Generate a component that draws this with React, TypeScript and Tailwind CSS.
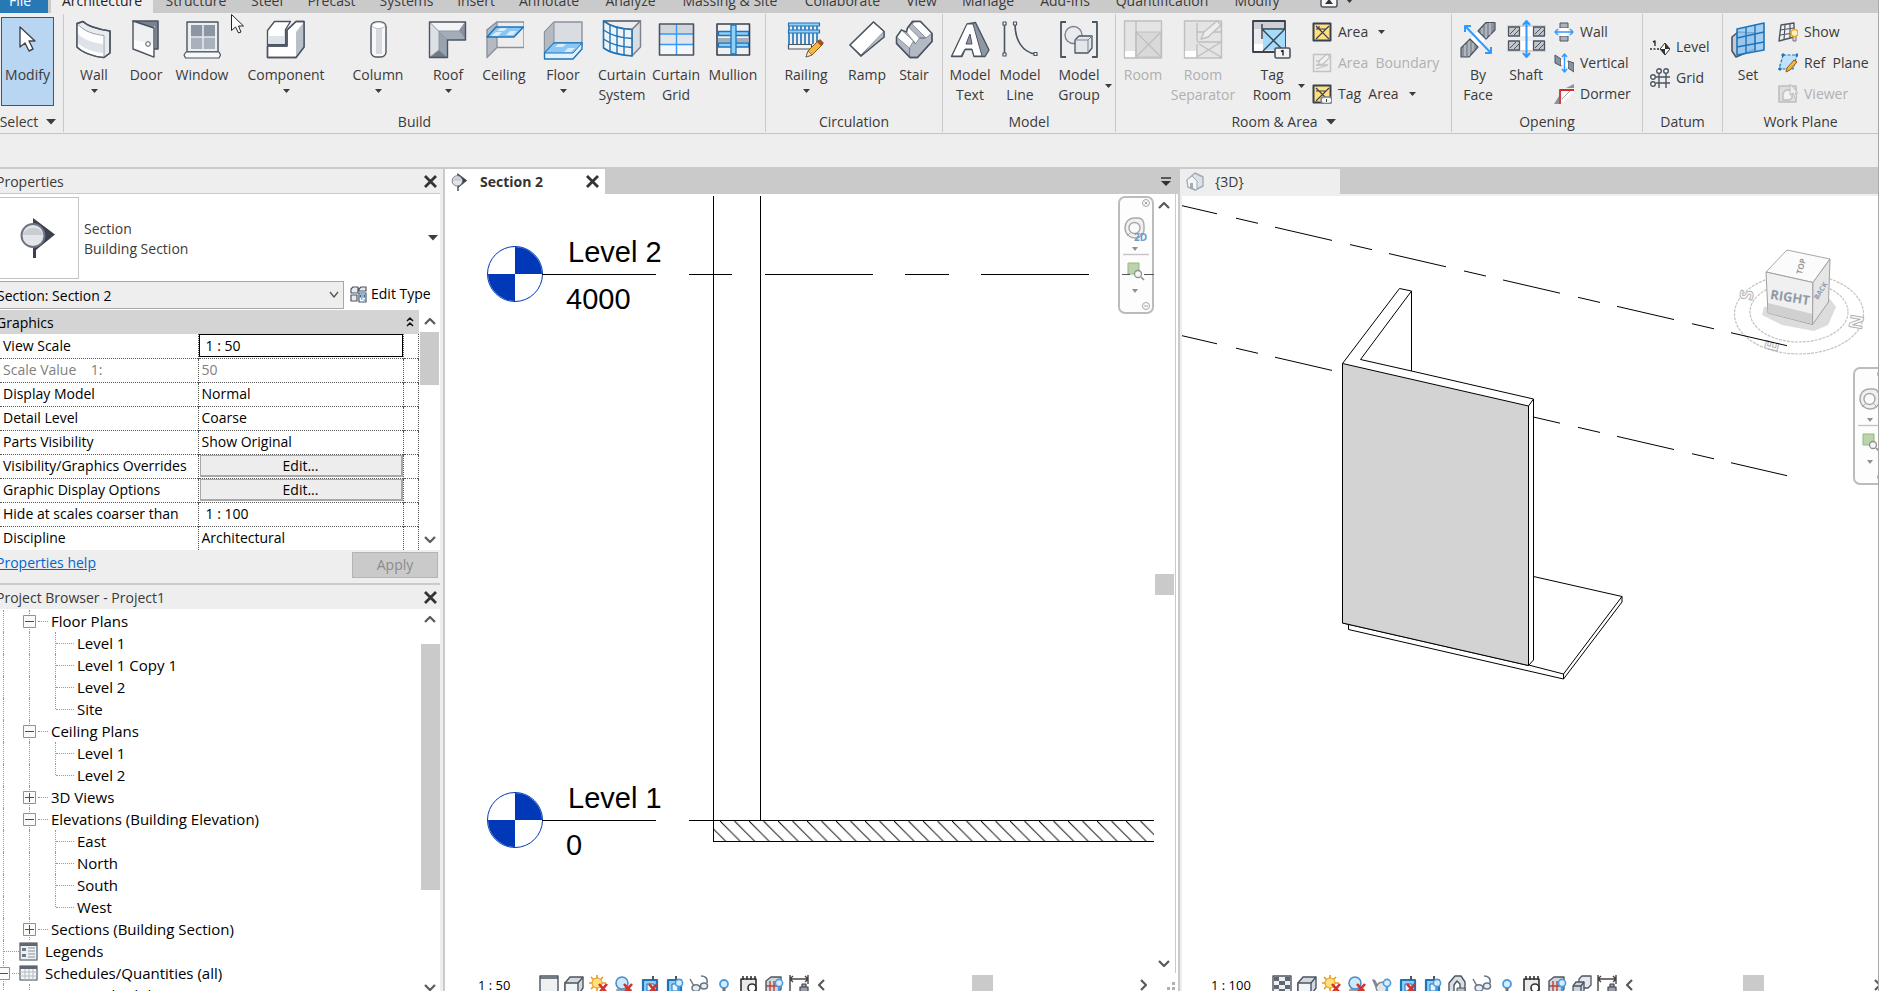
import type { ReactNode } from 'react';
import { clsx } from 'clsx';

const INK = '#4b5562';
const BLUE = '#1f74b8';
const AZURE = '#3399ff';

/* ---------- shared bits ---------- */

function Svg({ w, h, children, className }: { w: number; h: number; children: ReactNode; className?: string }) {
  return (
    <svg
      width={w}
      height={h}
      viewBox={`0 0 ${w} ${h}`}
      fill="none"
      strokeLinejoin="round"
      aria-hidden="true"
      className={clsx('block shrink-0', className)}
    >
      {children}
    </svg>
  );
}

function Caret({ big = false, className }: { big?: boolean; className?: string }) {
  return big ? (
    <Svg w={10} h={6} className={className}>
      <path d="M0 0h10L5 5.500z" fill="#3c3c3c" />
    </Svg>
  ) : (
    <Svg w={7} h={4} className={className}>
      <path d="M0 0h7L3.500 4z" fill="#3c3c3c" />
    </Svg>
  );
}

function Chevron({ dir }: { dir: 'up' | 'down' | 'left' | 'right' }) {
  const d = {
    up: 'M1 8l5-5 5 5',
    down: 'M1 4l5 5 5-5',
    left: 'M8 1L3 6l5 5',
    right: 'M4 1l5 5-5 5',
  }[dir];
  return (
    <Svg w={12} h={12}>
      <path d={d} stroke="#5a5a5a" strokeWidth="2.200" />
    </Svg>
  );
}

function CloseIcon() {
  return (
    <Svg w={13} h={13}>
      <path d="M1 1l11 11M12 1L1 12" stroke="#333" strokeWidth="2.800" />
    </Svg>
  );
}

function SectionHead({ size }: { size: number }) {
  return (
    <svg width={size} height={size} viewBox="0 0 40 40" fill="none" aria-hidden="true" className="block shrink-0">
      <path d="M14 0L36 16.500 17 32v8h-3z" fill="#3b414d" />
      <circle cx="14" cy="17.500" r="11.500" fill="#e3e5e8" stroke="#6b7380" strokeWidth="2" />
      <path d="M4 17a10.500 10.500 0 0120 0z" fill="#c9ccd1" />
    </svg>
  );
}

/* ---------- ribbon icons, 40 x 40 ---------- */

const big: Record<string, ReactNode> = {
  modify: (
    <path d="M12 7v20l5-4 4 8 4-2-4-8h6z" fill="#fff" stroke="#3f4650" strokeWidth="1.400" />
  ),
  wall: (
    <g stroke={INK} strokeWidth="1.400">
      <path d="M3 3.500l6-2c6 6 17 8 27 9.500v22l-6 4.500C19 37 8 32 3 27z" fill="#e9ebee" />
      <path d="M3 3.500c7 8 17 11 27 12v22C19 37 8 32 3 27z" fill="#fdfdfd" stroke="#9aa1aa" strokeWidth="1" />
      <path d="M4 14c8 7 17 9 25 10v9C18 32 9 28 4 23z" fill="#dfe3e9" stroke="none" />
      <path d="M3 3.500l6-2c6 6 17 8 27 9.500v22l-6 4.500C19 37 8 32 3 27z" />
    </g>
  ),
  door: (
    <g>
      <path d="M7 1h25v28h-5V8z" fill="#7b838f" stroke={INK} strokeWidth="1.600" />
      <path d="M29 6v22h-2V7z" fill="#d0d5db" />
      <path d="M7 1l21 7v29L7 29z" fill="#eef0f2" stroke={INK} strokeWidth="1.400" />
      <path d="M8 20l19 4v12L8 28z" fill="#fff" opacity=".8" />
      <circle cx="22" cy="24" r="2.300" fill="#fff" stroke={INK} />
    </g>
  ),
  window: (
    <g>
      <rect x="5" y="2" width="31" height="30" fill="#eceef0" stroke={INK} strokeWidth="1.400" />
      <rect x="9" y="5" width="24" height="24" fill="#8b95a4" />
      <path d="M9 17h24v12H9z" fill="#a9b1bd" />
      <path d="M21 5v24M9 17h24" stroke="#e6e8eb" strokeWidth="1.600" />
      <path d="M4 32h33l1.500 3-1.500 3H3.500L2 35z" fill="#f7f8f9" stroke={INK} strokeWidth="1.200" />
    </g>
  ),
  component: (
    <g stroke={INK} strokeWidth="1.400">
      <path d="M1.500 10.500l7-9h16l-5 8v15h-18z" fill="#fff" />
      <path d="M2.500 16h16v8h-16z" fill="#dfe3e9" stroke="none" />
      <path d="M21 10l9-8.500h8V27l-8 10.500H1.500V26H21z" fill="#fff" />
      <path d="M30 12l8-10v25l-8 10.500z" fill="#b9c0ca" stroke="none" />
      <path d="M21 10l9-8.500h8V27l-8 10.500H1.500V26H21z" />
    </g>
  ),
  column: (
    <g>
      <rect x="13" y="2" width="15" height="35" rx="5" fill="#f8f8f9" stroke={INK} strokeWidth="1.400" />
      <path d="M18 8h6v26h-6z" fill="#d6d9dd" />
      <ellipse cx="20.500" cy="5.500" rx="6.500" ry="3" fill="#fff" stroke="#b9bec5" />
    </g>
  ),
  roof: (
    <g>
      <path d="M1.500 2h36v18h-18v17.500h-18z" fill="#dde1e6" />
      <path d="M1.500 2h36l-6 9H11z" fill="#f3f4f6" />
      <path d="M11 11h20l6.500 9h-18z" fill="#a3acb8" />
      <path d="M31 11l6.500-9v18z" fill="#8791a0" />
      <path d="M11 11v19l8.500 7.500V20z" fill="#98a2b0" />
      <path d="M1.500 37.500L11 30l8.500 7.500z" fill="#6f7987" />
      <path d="M1.500 2L19.500 20M11 30V11h20M11 30l-9 7M31 11l6-8.500" stroke="#8d96a3" />
      <path d="M1.500 2h36v18h-18v17.500h-18z" stroke={INK} strokeWidth="1.400" />
    </g>
  ),
  ceiling: (
    <g>
      <path d="M3 10l10-8h27v25.500H13z" fill="#ededee" stroke="#8c929b" strokeWidth="1.400" />
      <path d="M3 10l10-8v25.500L3 37.500z" fill="#b5bac2" stroke="#8c929b" strokeWidth="1.400" />
      <path d="M12 7h27.500L30 17H3z" fill="#8cc6f5" stroke={BLUE} strokeWidth="1.400" />
      <path d="M16 8h7l-3 3h-7zM26 11h7l-4 4h-7zM12 12h6l-4 4H7z" fill="#d7ecfc" />
    </g>
  ),
  floor: (
    <g>
      <path d="M1.500 12L11 2h28v22H11L1.500 33z" fill="#d9dce1" stroke="#8c929b" strokeWidth="1.400" />
      <path d="M1.500 12L11 2v22L1.500 33z" fill="#b5bac2" stroke="#8c929b" />
      <path d="M1.500 33L11 23h28v6L30 39H1.500z" fill="#e2f2fd" stroke={BLUE} strokeWidth="1.400" />
      <path d="M1.500 33L11 23h28l-9 10z" fill="#8cc6f5" stroke={BLUE} />
      <path d="M15 24h8l-3 3h-8zM25 28h7l-4 4h-7z" fill="#d7ecfc" />
    </g>
  ),
  curtainSystem: (
    <g>
      <path d="M1.500 1h37L30 9.500C18 9 8 6 1.500 1z" fill="#eee" stroke={INK} strokeWidth="1.400" />
      <path d="M30 9.500L38.500 1v26L30 36z" fill="#dadde1" stroke="#7b828c" strokeWidth="1.400" />
      <path d="M1.500 1C8 6 18 9 30 9.500V36C18 35 8 33 1.500 28z" fill="#eef3f8" stroke={BLUE} strokeWidth="1.600" />
      <path
        d="M1.500 10c7 5 17 8 28.500 8.500M1.500 19c7 5 17 8 28.500 8.500M8 5v27M15 8v26M22 9v26"
        stroke={BLUE}
        strokeWidth="1.400"
      />
    </g>
  ),
  curtainGrid: (
    <g>
      <path d="M3.500 4h34v31h-34z" fill="#f5f6f7" />
      <path d="M3.500 4h34v10h-34z" fill="#d2d5da" />
      <path d="M3.500 14h34v10h-34z" fill="#e4e6ea" />
      <path d="M20.500 4v31M3.500 14h34M3.500 24.500h34" stroke={AZURE} strokeWidth="1.400" />
      <path d="M3.500 4h34v31h-34z" stroke={INK} strokeWidth="1.600" />
    </g>
  ),
  mullion: (
    <g>
      <path d="M4 4h32.500v31H4z" fill="#eef0f2" stroke="#39414d" strokeWidth="1.600" />
      <path d="M5 18h31v4H5z" fill="#a6adb7" />
      <path d="M5.500 11.500h30v4h-30zM5.500 23h30v4h-30z" fill="#8fd0fb" stroke={BLUE} strokeWidth="1.300" />
      <path d="M18 5h5v29h-5z" fill="#8fd0fb" stroke={BLUE} strokeWidth="1.300" />
    </g>
  ),
  railing: (
    <g>
      <path d="M3 5v22M7 5v19M11 5v19M15 5v19M19 5v19M23 5v19M27 5v19M31 5v19" stroke={BLUE} strokeWidth="1.600" />
      <path d="M2.500 3h31v3h-31zM2.500 10h31v3h-31z" fill="#8fd0fb" stroke={BLUE} strokeWidth="1.200" />
      <path d="M2.500 24.500h23v4.500h-23z" fill="#f4f4f4" stroke={INK} strokeWidth="1.200" />
      <path d="M20 37l2-6 11-11 4 4-11 11z" fill="#f6b73c" stroke="#8a5a1c" />
      <path d="M31 22l4 4 3-3-4-4z" fill="#a3512c" />
      <path d="M20 37l2-6 4 4z" fill="#f5e6cf" stroke="#6b5a45" strokeWidth=".8" />
    </g>
  ),
  ramp: (
    <g stroke={INK} strokeWidth="1.300">
      <path d="M3 25L26.500 2 37 11.500V17L14 36z" fill="#c9ced5" />
      <path d="M3 25L26.500 2 37 11.500 14 35z" fill="#fff" stroke="#7c838d" strokeWidth="1" />
      <path d="M14 36l23-24v5.500z" fill="#b6bdc7" stroke="none" />
      <path d="M3 25L26.500 2 37 11.500V17L14 36z" />
    </g>
  ),
  stair: (
    <g stroke={INK} strokeWidth="1.300">
      <path d="M2.500 17l5-7 5 2 1-4 5-6.500h8l11.500 12v8L23.500 37.500H16L2.500 23.500z" fill="#b3bac4" />
      <path d="M2.500 17l5-7 12 11-4 7zM12.500 12l2-5 11 11-4 6zM18 4l3-2.500h5L38 13l-6 5z" fill="#fff" stroke="#8d949e" strokeWidth="1" />
      <path d="M15.500 28v9M19.500 21l2 3M25.500 18l6 0" stroke="#7c838d" />
      <path d="M2.500 17l5-7 5 2 1-4 5-6.500h8l11.500 12v8L23.500 37.500H16L2.500 23.500z" />
    </g>
  ),
  modelText: (
    <g>
      <path d="M17 4l8.500-1.500L39 30l-4 6.500H24l-2-7h-7l-3 7H1.500z" fill="#8f97a3" stroke={INK} strokeWidth="1.400" />
      <path d="M17 4h6l9 32h-8l-2-7h-7l-4 7H2zM20 14l-4 10h6z" fill="#fff" fillRule="evenodd" stroke={INK} />
    </g>
  ),
  modelLine: (
    <g stroke={INK} strokeWidth="1.600">
      <path d="M4.500 4v30M15 4c0 17 8 28 20 30" />
      <path d="M3 2h3v3H3zM3 33h3v3H3zM13.500 2h3v3h-3zM34 32.500h3v3h-3z" fill="#fff" strokeWidth="1.200" />
    </g>
  ),
  modelGroup: (
    <g>
      <path d="M7 2H2v35h5M33 2h5v35h-5" stroke={INK} strokeWidth="1.800" />
      <circle cx="14.500" cy="15" r="8.500" fill="#e8eaed" stroke="#7c838d" strokeWidth="1.400" />
      <path d="M16 20l4-4h13v12l-4 5H16z" fill="#e3e6ea" stroke={INK} strokeWidth="1.300" />
      <path d="M16 20h13v13M29 20l4-4" stroke="#7c838d" />
    </g>
  ),
  room: (
    <g stroke="#bfbfbf">
      <path d="M1.500 1h37v37h-37z" fill="#e4e4e4" strokeWidth="1.400" />
      <path d="M2 31h10v6H2z" fill="#fff" stroke="none" />
      <path d="M13 12h25v25H13z" fill="#d9d9d9" strokeWidth="1.200" />
      <path d="M13 1v36M13 12l25 25M38 12L13 37" strokeWidth="1.400" />
    </g>
  ),
  roomSeparator: (
    <g stroke="#bfbfbf">
      <path d="M1.500 1h37v37h-37z" fill="#e4e4e4" strokeWidth="1.400" />
      <path d="M2 31h11v6H2z" fill="#fff" stroke="none" />
      <path d="M14 3v18M14 22h24M14 24v13M14 37l24-15M16 24l22 13M14 12h10M30 12h8" strokeWidth="1.400" />
      <path d="M18 19l3-7L34 1l4 4-13 12z" fill="#eee" strokeWidth="1.400" />
    </g>
  ),
  tagRoom: (
    <g>
      <path d="M1 1h32v31H1z" fill="#e9ebee" stroke="#39414d" strokeWidth="1.800" />
      <path d="M2 2h30v7H2z" fill="#cdd1d7" />
      <path d="M11 10h22v20H11z" fill="#a6dcfb" />
      <path d="M2 24h9v7H2z" fill="#fff" />
      <path d="M10 4v15M10 9h23M11 10l21 21M32 10L11 31" stroke="#39414d" strokeWidth="1.400" />
      <rect x="23" y="28" width="15" height="10" rx="1.500" fill="#f4f4f4" stroke={INK} strokeWidth="1.600" />
      <path d="M29 31.500l2-1v5" stroke="#222" strokeWidth="1.400" />
    </g>
  ),
  byFace: (
    <g>
      <path d="M12 19l8-8 8 8-8 8z" fill="#fff" />
      <path d="M37 2.500h-9l-8 8.500 8 8 9-9zM3 37V28l9-9 8 8-9 10z" fill="#8c929b" stroke={INK} strokeWidth="1.200" />
      <path d="M24 8v6M28 4v14M32 3v12M7 25v11M11 21v15M15 23v8" stroke="#d4d7dc" />
      <path d="M8 7l24 25M7 12V6h6M27 33h6v-6" stroke={AZURE} strokeWidth="2" />
    </g>
  ),
  shaft: (
    <g>
      <path d="M1 5h39v2H1zM1 30h39v2H1z" fill="#d3d3d3" />
      <path d="M13 7h15v9H13zM13 21h15v9H13z" fill="#fff" />
      <path d="M2.500 7h11v9h-11zM27.500 7h11v9h-11zM2.500 21h11v9h-11zM27.500 21h11v9h-11z" fill="#c3c7cd" stroke={INK} strokeWidth="1.300" />
      <path d="M4 14l6-6M8 15l5-5M29 14l6-6M33 15l5-5M4 28l6-6M8 29l5-5M29 28l6-6M33 29l5-5" stroke={INK} />
      <path d="M20.500 1v36M17 5l3.500-4L24 5M17 33l3.500 4 3.500-4" stroke={AZURE} strokeWidth="2" />
    </g>
  ),
  setPlane: (
    <g>
      <path d="M4 17l6-5 17 1v16L8 37l-4-6z" fill="#c5cad1" stroke={INK} strokeWidth="1.600" />
      <path d="M9 9l27-6v27L9 35z" fill="#8cc6f5" fillOpacity=".75" stroke={BLUE} strokeWidth="1.600" />
      <path d="M18 7v26M27 5v27M9 18l27-6M9 27l27-5" stroke={BLUE} strokeWidth="1.400" />
    </g>
  ),
};

/* ---------- ribbon icons, 20 x 20 ---------- */

const small: Record<string, ReactNode> = {
  area: (
    <g stroke="#39414d">
      <path d="M1.500 1.500h17v17h-17z" fill="#ffdf7e" strokeWidth="2" />
      <path d="M4 4l13 13M17 4L4 17M4 7h10M7 4v3" strokeWidth="1.100" />
    </g>
  ),
  areaBoundary: (
    <g stroke="#c2c2c2">
      <path d="M1.500 1.500h17v17h-17z" fill="#ececec" strokeWidth="1.400" />
      <path d="M4 8h4M4 12h12M4 16l12-4" strokeWidth="1.300" />
      <path d="M6 12l2-5 7-6 3 3-7 7z" fill="#f2f2f2" strokeWidth="1.300" />
    </g>
  ),
  tagArea: (
    <g stroke="#39414d">
      <path d="M1.500 1.500h17v17h-17z" fill="#ffdf7e" strokeWidth="2" />
      <path d="M4 4l13 13M17 4L4 17M4 7h10" strokeWidth="1.100" />
      <rect x="9" y="13" width="11" height="6.500" rx="3" fill="#f4f4f4" stroke="#7c838d" strokeWidth="1.500" />
      <path d="M14.500 15v3" />
    </g>
  ),
  openWall: (
    <g>
      <path d="M6 1h8v5H6zM6 14h8v5H6z" fill="#aeb3bb" stroke={INK} />
      <path d="M6 6h8v8H6z" fill="#fff" />
      <path d="M1 10h18M4 7l-3 3 3 3M16 7l3 3-3 3" stroke={AZURE} strokeWidth="1.400" />
    </g>
  ),
  openVertical: (
    <g>
      <path d="M1 2l6 4v7l-6-3zM14 8l6 2v9l-6-4z" fill="#8c929b" stroke={INK} />
      <path d="M7 6l7 3v6l-7-3z" fill="#fff" />
      <path d="M10.500 1v18M8 4l2.500-3L13 4M8 16l2.500 3 2.500-3" stroke={AZURE} strokeWidth="1.400" />
    </g>
  ),
  dormer: (
    <g>
      <path d="M12 4l8-4v4zM0 20l5-8v8z" fill="#8c929b" />
      <path d="M7 7h13L9 19z" fill="#fff" />
      <path d="M16 7L8 15" stroke="#aaa" />
      <path d="M6 20V6h14" stroke="#d42a2a" strokeWidth="1.800" />
    </g>
  ),
  level: (
    <g>
      <path d="M0 12h10" stroke="#333" strokeWidth="1.300" strokeDasharray="2 1.500" />
      <path d="M3 5l2-1v5" stroke="#333" strokeWidth="1.400" />
      <path d="M15 6l5 6-5 6-5-6z" fill="#fff" stroke="#333" />
      <path d="M15 6l5 6h-5zM15 18l-5-6h5z" fill="#333" />
    </g>
  ),
  grid: (
    <g stroke={INK} strokeWidth="1.400">
      <path d="M6 9h14M6 15h14M9 5v15M16 5v15" />
      <circle cx="9" cy="3" r="2.300" fill="#fff" />
      <circle cx="16" cy="3" r="2.300" fill="#fff" />
      <circle cx="3" cy="9" r="2.300" fill="#fff" />
      <circle cx="3" cy="16" r="2.300" fill="#fff" />
    </g>
  ),
  show: (
    <g>
      <path d="M3 3l13-2v14L1 19z" fill="#f1f1f1" stroke={INK} strokeWidth="1.400" />
      <path d="M2 8l14-2M2 13l14-2M7 3L6 18M12 2v14" stroke={INK} strokeWidth="1.200" />
      <path d="M15 14h3v5h-3z" fill="#d8dade" stroke="#6b7380" />
      <circle cx="16.500" cy="11" r="3.500" fill="#fff1b8" stroke="#f1a820" strokeWidth="1.600" />
    </g>
  ),
  refPlane: (
    <g>
      <path d="M5 2h14l-4 14H1z" fill="#bfe2fa" stroke={BLUE} strokeWidth="1.200" strokeDasharray="3 1.500" />
      <path d="M4 1h2v2H4zM18 1h2v2h-2zM1 15h2v2H1z" fill={BLUE} stroke={BLUE} />
      <path d="M8 19l1-4 7-8 3 2-7 8z" fill="#f6b73c" stroke="#8a5a1c" />
    </g>
  ),
  viewer: (
    <g stroke="#bdbdbd">
      <path d="M1 2h17v16H1z" fill="#dedede" strokeWidth="1.600" />
      <path d="M5 9l3-3h6v8l-3 2H5z" fill="#f2f2f2" strokeWidth="1.400" />
      <path d="M12 0v11l3-2 2 5 2-1-2-4h3z" fill="#eee" />
    </g>
  ),
};

/* ---------- view control bar icons ---------- */

const redCross = <path d="M10 9l8 9M18 9l-8 9" stroke="#d0342c" strokeWidth="2.600" />;
const bulb = (
  <g>
    <circle cx="15" cy="8" r="3.600" fill="#d7ecfc" stroke="#4a9be0" strokeWidth="1.600" />
    <path d="M15 12v6" stroke="#4a9be0" strokeWidth="2.400" />
  </g>
);

const controls: Record<string, ReactNode> = {
  coarse: <path d="M1 1h18v18H1zM1 3h18" fill="#eef0f1" stroke={INK} strokeWidth="1.400" />,
  medium: (
    <g>
      <path d="M1 1h18v18H1z" fill="#f0f0f0" stroke={INK} strokeWidth="1.400" />
      <path d="M2 2h5v4H2zM13 2h5v4h-5zM7 6h6v4H7zM2 10h5v4H2zM13 10h5v4h-5zM7 14h6v4H7z" fill="#5e6773" />
    </g>
  ),
  style: (
    <g stroke={INK} strokeWidth="1.400">
      <path d="M1 8l5-6h13v11l-5 7H1z" fill="#d5d9de" />
      <path d="M1 8h13v12H1z" fill="#f4f5f6" />
      <path d="M14 8l5-6" />
    </g>
  ),
  sun: (
    <g>
      <path d="M8 0v17M0 8h17M2 2l12 12M14 2L2 14" stroke="#e59a1c" strokeWidth="1.600" />
      <circle cx="8" cy="8" r="5" fill="#ffe07a" stroke="#e59a1c" />
      {redCross}
    </g>
  ),
  shadow: (
    <g>
      <ellipse cx="10" cy="15" rx="8" ry="3" fill="#9aa1aa" />
      <circle cx="8" cy="8" r="6" fill="#cfe8fb" stroke="#4a8fc6" strokeWidth="1.600" />
      {redCross}
    </g>
  ),
  teapot: (
    <g>
      <path d="M1 5c3 0 3 4 4 6 1-4 9-6 10 0 0 5-2 7-5 7s-6-2-6-6z" fill="#e3e5e8" stroke="#7c838d" strokeWidth="1.400" />
      {bulb}
    </g>
  ),
  crop: (
    <g>
      <path d="M4 5h14v13H4z" fill="#8fd0fb" stroke={BLUE} strokeWidth="2.200" />
      <path d="M0 17h4M14 5V1" stroke={INK} strokeWidth="2" />
      <path d="M8 9h7v7H8z" fill="#e8f4fd" stroke={BLUE} />
      {redCross}
    </g>
  ),
  cropShow: (
    <g>
      <path d="M4 5h13v13H4z" fill="#8fd0fb" stroke={BLUE} strokeWidth="2.200" />
      <path d="M0 17h4M12 5V1" stroke={INK} strokeWidth="2" />
      <path d="M8 9h6v7H8z" fill="#e8f4fd" stroke={BLUE} />
      {bulb}
    </g>
  ),
  lock3d: (
    <g>
      <path d="M2 17V8l6-7h6l4 6v9h-5V9l-3-3-3 4v7z" fill="#dcdfe3" stroke={INK} strokeWidth="1.400" />
      <path d="M10 13h8v6h-8z" fill="#b6bbc3" stroke={INK} />
    </g>
  ),
  glasses: (
    <g stroke="#6b7380" strokeWidth="1.500">
      <path d="M1 4l4 7M12 1c4 0 7 2 6 7" />
      <ellipse cx="7" cy="13" rx="4" ry="3.300" fill="#e3eef7" />
      <ellipse cx="15" cy="11" rx="3.500" ry="3" fill="#e3eef7" />
    </g>
  ),
  reveal: (
    <g>
      <circle cx="10" cy="9" r="4" fill="#d7ecfc" stroke="#4a9be0" strokeWidth="1.800" />
      <path d="M10 13v6" stroke="#6b7380" strokeWidth="3" />
    </g>
  ),
  properties: (
    <g>
      <path d="M2 4h15v14H2z" fill="#e8eaec" stroke="#333" strokeWidth="1.600" />
      <path d="M4 1v4M8 1v4M12 1v4M16 1v4" stroke="#333" strokeWidth="1.600" />
      <circle cx="13" cy="13" r="4" fill="#fff" stroke="#333" strokeWidth="1.600" />
    </g>
  ),
  analytical: (
    <g>
      <path d="M2 6l5-4h10v12l-4 5H2z" fill="#d4d8dd" stroke={INK} strokeWidth="1.400" />
      <path d="M2 11h11M6 6v12M10 6v12" stroke="#b5433b" strokeWidth="1.400" />
      {bulb}
    </g>
  ),
  displace: (
    <g stroke={INK} strokeWidth="1.300">
      <path d="M7 4l3-3h9v9l-3 3H7z" fill="#e6e8eb" />
      <path d="M1 11l3-4h8v9l-3 4H1z" fill="#cfd3d9" />
      <path d="M1 11h8v9M9 11l3-4" />
    </g>
  ),
  constraints: (
    <g>
      <path d="M1 0v19M19 0v9M1 4h18M4 1L1 4l3 3M16 1l3 3-3 3" stroke="#444" strokeWidth="1.400" />
      <path d="M3 17h7" stroke="#444" strokeDasharray="2 1" />
      <path d="M11 12h8v7h-8zM13 12V9h4v3" fill="#9aa1aa" stroke="#444" strokeWidth="1.200" />
    </g>
  ),
};

/* ---------- ribbon ---------- */

const tabs = [
  { name: 'Structure', cls: 'w-[86px]' },
  { name: 'Steel', cls: 'w-[56px]' },
  { name: 'Precast', cls: 'w-[73px]' },
  { name: 'Systems', cls: 'w-[77px]' },
  { name: 'Insert', cls: 'w-[62px]' },
  { name: 'Annotate', cls: 'w-[84px]' },
  { name: 'Analyze', cls: 'w-[79px]' },
  { name: 'Massing & Site', cls: 'w-[120px]' },
  { name: 'Collaborate', cls: 'w-[105px]' },
  { name: 'View', cls: 'w-[53px]' },
  { name: 'Manage', cls: 'w-[80px]' },
  { name: 'Add-Ins', cls: 'w-[74px]' },
  { name: 'Quantification', cls: 'w-[120px]' },
  { name: 'Modify', cls: 'w-[70px]' },
];

function RibbonTabs() {
  return (
    <nav className="flex h-[13px] shrink-0 items-end overflow-hidden bg-[#cacaca] text-[14px] leading-6">
      <button className="h-6 w-12 shrink-0 bg-[#2878b5] pr-2 text-center text-white">File</button>
      <button className="ml-[3px] h-6 w-[102px] shrink-0 bg-[#eee] text-center text-[#222]">Architecture</button>
      {tabs.map((t) => (
        <button key={t.name} className={clsx('h-6 shrink-0 whitespace-nowrap text-center', t.cls)}>
          {t.name}
        </button>
      ))}
      <button aria-label="Minimize ribbon" className="ml-[28px] flex h-6 items-center gap-2">
        <Svg w={18} h={24}>
          <rect x="1" y="4" width="16" height="14" rx="2" fill="#f6f6f6" stroke={INK} strokeWidth="1.500" />
          <path d="M9 10l4 5H5z" fill="#333" />
        </Svg>
        <Caret />
      </button>
    </nav>
  );
}

type ToolProps = {
  icon: string;
  lines: string[];
  width: string;
  menu?: boolean;
  side?: boolean;
  disabled?: boolean;
};

function Tool({ icon, lines, width, menu, side, disabled }: ToolProps) {
  return (
    <button
      disabled={disabled}
      className={clsx(
        'relative flex shrink-0 flex-col items-center pt-[3px] leading-5 whitespace-nowrap',
        width,
        disabled && 'text-[#b0b0b0]',
      )}
    >
      <Svg w={40} h={40} className="mb-[5px]">
        {big[icon]}
      </Svg>
      {lines.map((l) => (
        <span key={l}>{l}</span>
      ))}
      {menu && <Caret className="mt-1" />}
      {side && <Caret className="absolute right-[3px] bottom-6" />}
    </button>
  );
}

function SmallTool({ icon, label, menu, disabled }: { icon: string; label: string; menu?: boolean; disabled?: boolean }) {
  return (
    <button
      disabled={disabled}
      className={clsx('flex h-[31px] items-center whitespace-pre', disabled && 'text-[#b0b0b0]')}
    >
      <Svg w={20} h={20} className="mr-[6px]">
        {small[icon]}
      </Svg>
      {label}
      {menu && <Caret className="ml-[10px]" />}
    </button>
  );
}

function Panel({ title, width, menu, children }: { title: string; width: string; menu?: boolean; children: ReactNode }) {
  return (
    <section className={clsx('mt-px mb-px flex flex-col border-r border-[#c9c9c9]', width)}>
      <div className="flex h-[99px] pt-[3px]">{children}</div>
      <h2 className="flex h-5 items-center justify-center gap-2 whitespace-nowrap">
        {title}
        {menu && <Caret big />}
      </h2>
    </section>
  );
}

function Ribbon() {
  return (
    <div className="flex h-[121px] shrink-0 overflow-hidden border-b border-[#c4c4c4]">
      <Panel title="Select" width="w-16 shrink-0 pr-[7px]" menu>
        <button className="ml-px flex h-[89px] w-[53px] shrink-0 flex-col items-center border border-[#0f62ae] bg-[#b8d5f2] pt-[2px] leading-5">
          <Svg w={40} h={40} className="mb-[5px]">
            {big.modify}
          </Svg>
          Modify
        </button>
      </Panel>
      <Panel title="Build" width="w-[702px] shrink-0">
        <Tool icon="wall" lines={['Wall']} width="w-[60px]" menu />
        <Tool icon="door" lines={['Door']} width="w-[44px]" />
        <Tool icon="window" lines={['Window']} width="w-[68px]" />
        <Tool icon="component" lines={['Component']} width="w-[100px]" menu />
        <Tool icon="column" lines={['Column']} width="w-[84px]" menu />
        <Tool icon="roof" lines={['Roof']} width="w-[56px]" menu />
        <Tool icon="ceiling" lines={['Ceiling']} width="w-[56px]" />
        <Tool icon="floor" lines={['Floor']} width="w-[62px]" menu />
        <Tool icon="curtainSystem" lines={['Curtain', 'System']} width="w-[56px]" />
        <Tool icon="curtainGrid" lines={['Curtain', 'Grid']} width="w-[52px]" />
        <Tool icon="mullion" lines={['Mullion']} width="w-[62px]" />
      </Panel>
      <Panel title="Circulation" width="w-[177px] shrink-0">
        <Tool icon="railing" lines={['Railing']} width="w-[80px]" menu />
        <Tool icon="ramp" lines={['Ramp']} width="w-[42px]" />
        <Tool icon="stair" lines={['Stair']} width="w-[52px]" />
      </Panel>
      <Panel title="Model" width="w-[173px] shrink-0">
        <Tool icon="modelText" lines={['Model', 'Text']} width="w-[54px]" />
        <Tool icon="modelLine" lines={['Model', 'Line']} width="w-[46px]" />
        <Tool icon="modelGroup" lines={['Model', 'Group']} width="w-[72px]" side />
      </Panel>
      <Panel title="Room & Area" width="w-[336px] shrink-0" menu>
        <Tool icon="room" lines={['Room']} width="w-[54px]" disabled />
        <Tool icon="roomSeparator" lines={['Room', 'Separator']} width="w-[66px]" disabled />
        <Tool icon="tagRoom" lines={['Tag', 'Room']} width="w-[72px]" side />
        <div className="-mt-px ml-1 flex flex-col">
          <SmallTool icon="area" label="Area" menu />
          <SmallTool icon="areaBoundary" label="Area  Boundary" disabled />
          <SmallTool icon="tagArea" label="Tag  Area" menu />
        </div>
      </Panel>
      <Panel title="Opening" width="w-[191px] shrink-0">
        <Tool icon="byFace" lines={['By', 'Face']} width="w-[52px]" />
        <Tool icon="shaft" lines={['Shaft']} width="w-[44px]" />
        <div className="-mt-px ml-[6px] flex flex-col">
          <SmallTool icon="openWall" label="Wall" />
          <SmallTool icon="openVertical" label="Vertical" />
          <SmallTool icon="dormer" label="Dormer" />
        </div>
      </Panel>
      <Panel title="Datum" width="w-20 shrink-0">
        <div className="-mt-px ml-[7px] flex flex-col pt-[15px]">
          <SmallTool icon="level" label="Level" />
          <SmallTool icon="grid" label="Grid" />
        </div>
      </Panel>
      <Panel title="Work Plane" width="flex-1 border-r-0">
        <Tool icon="setPlane" lines={['Set']} width="w-[50px]" />
        <div className="-mt-px ml-[5px] flex flex-col">
          <SmallTool icon="show" label="Show" />
          <SmallTool icon="refPlane" label="Ref  Plane" />
          <SmallTool icon="viewer" label="Viewer" disabled />
        </div>
      </Panel>
    </div>
  );
}

/* ---------- properties palette ---------- */

const properties: { name: string; value: string; kind?: 'input' | 'button' | 'muted' | 'indent' }[] = [
  { name: 'View Scale', value: '1 : 50', kind: 'input' },
  { name: 'Scale Value    1:', value: '50', kind: 'muted' },
  { name: 'Display Model', value: 'Normal' },
  { name: 'Detail Level', value: 'Coarse' },
  { name: 'Parts Visibility', value: 'Show Original' },
  { name: 'Visibility/Graphics Overrides', value: 'Edit...', kind: 'button' },
  { name: 'Graphic Display Options', value: 'Edit...', kind: 'button' },
  { name: 'Hide at scales coarser than', value: '1 : 100', kind: 'indent' },
  { name: 'Discipline', value: 'Architectural' },
];

function PaletteHeader({ title }: { title: string }) {
  return (
    <header className="flex h-6 shrink-0 items-center justify-between pr-[3px] text-[#3a3a3a]">
      <h2 className="-ml-1 pt-px">{title}</h2>
      <button aria-label={`Close ${title}`}>
        <CloseIcon />
      </button>
    </header>
  );
}

function PropertiesPalette() {
  return (
    <section className="shrink-0">
      <PaletteHeader title="Properties" />
      <div className="flex h-[88px] items-center border-t border-[#cacaca] bg-white text-[#3a3a3a]">
        <div className="flex h-[82px] w-[79px] items-center justify-center border border-l-0 border-[#c4c4c8]">
          <SectionHead size={40} />
        </div>
        <p className="ml-[5px] flex-1 pt-[2px] leading-5">
          Section
          <br />
          Building Section
        </p>
        <Caret big className="mr-0.5" />
      </div>
      <div className="flex h-[29px] bg-white text-black">
        <div className="relative h-7 flex-1">
          <select
            aria-label="Instance"
            className="h-7 w-full appearance-none border border-l-0 border-[#a8a8a8] bg-[#eee] pt-px indent-[-3px] leading-6"
          >
            <option>Section: Section 2</option>
          </select>
          <span className="pointer-events-none absolute top-[10px] right-[5px]">
            <Svg w={10} h={8}>
              <path d="M1 1l4 5 4-5" stroke="#555" strokeWidth="1.300" />
            </Svg>
          </span>
        </div>
        <button className="flex w-24 items-center gap-[4px] pl-[6px] pb-[3px] whitespace-nowrap">
          <Svg w={17} h={17}>
            <path d="M1 3l2-2h5v6H1zM9 3l2-2h5v4H9zM1 9h6v6H1z" fill="#e8eaed" stroke={INK} strokeWidth="1.200" />
            <path d="M9 7h7v9H9z" fill="#fff" stroke={INK} strokeWidth="1.200" />
            <path d="M10.500 9h4v2h-4zM11 13h1.500M13.500 14H15" stroke={BLUE} strokeWidth="1.200" />
          </Svg>
          Edit Type
        </button>
      </div>
      <div className="flex h-60 bg-white text-black">
        <div className="w-[419px]">
          <div className="flex h-6 items-center justify-between bg-[#d4d4d4] pr-[5px]">
            <h3 className="-ml-1 pt-px">Graphics</h3>
            <Svg w={8} h={10}>
              <path d="M1 4l3-3 3 3M1 9l3-3 3 3" stroke="#111" strokeWidth="1.500" />
            </Svg>
          </div>
          <table className="w-full table-fixed border-collapse">
            <colgroup>
              <col className="w-[198px]" />
              <col />
              <col className="w-[15px]" />
            </colgroup>
            <tbody>
              {properties.map((p) => (
                <tr key={p.name} className="h-6 border-b border-dotted border-[#555] last:border-b-0">
                  <th
                    scope="row"
                    className={clsx(
                      'overflow-hidden p-0 pl-[3px] text-left font-normal whitespace-pre',
                      p.kind === 'muted' && 'text-[#808080]',
                    )}
                  >
                    {p.name}
                  </th>
                  <td
                    className={clsx(
                      'border-x border-dotted border-[#555] p-0',
                      p.kind === 'muted' && 'text-[#808080]',
                      p.kind === 'indent' && 'pl-[7px]',
                      (!p.kind || p.kind === 'muted') && 'pl-[3px]',
                    )}
                  >
                    {p.kind === 'input' && (
                      <input
                        aria-label={p.name}
                        defaultValue={p.value}
                        className="block h-[23px] w-full border border-black bg-white pl-[6px]"
                      />
                    )}
                    {p.kind === 'button' && (
                      <button className="ml-px block h-[22px] w-[203px] border border-r-2 border-b-2 border-[#a8a8a8] bg-[#ededed] leading-[19px]">
                        {p.value}
                      </button>
                    )}
                    {p.kind !== 'input' && p.kind !== 'button' && p.value}
                  </td>
                  <td className="border-r border-dotted border-[#555] p-0" />
                </tr>
              ))}
            </tbody>
          </table>
        </div>
        <div className="flex flex-1 flex-col items-center justify-between pt-[6px] pb-[5px]">
          <div className="flex w-full flex-col items-center gap-1">
            <Chevron dir="up" />
            <div className="h-[53px] w-[19px] bg-[#cacaca]" />
          </div>
          <Chevron dir="down" />
        </div>
      </div>
      <footer className="flex h-[35px] justify-between border-b-2 border-[#cacaca] pt-[2px] pr-[2px]">
        <a href="#help" className="-ml-1 leading-[22px] text-[#0066cc] underline">
          Properties help
        </a>
        <button disabled className="h-[26px] w-[86px] border border-[#b4b4b4] bg-[#cacaca] text-[#8a8a8a]">
          Apply
        </button>
      </footer>
    </section>
  );
}

/* ---------- project browser ---------- */

type Node = { name: string; open?: boolean; children?: string[] };

const views: Node[] = [
  { name: 'Floor Plans', open: true, children: ['Level 1', 'Level 1 Copy 1', 'Level 2', 'Site'] },
  { name: 'Ceiling Plans', open: true, children: ['Level 1', 'Level 2'] },
  { name: '3D Views' },
  { name: 'Elevations (Building Elevation)', open: true, children: ['East', 'North', 'South', 'West'] },
  { name: 'Sections (Building Section)' },
];

function Expander({ open }: { open?: boolean }) {
  return (
    <button aria-label={open ? 'Collapse' : 'Expand'} className="block shrink-0">
      <Svg w={13} h={13}>
        <path d="M.5.5h12v12H.5z" fill="#fafafa" stroke="#919191" />
        <path d={open ? 'M2 6.500h9' : 'M2 6.500h9M6.500 2v9'} stroke="#2c4f9e" />
      </Svg>
    </button>
  );
}

function Dash() {
  return <span className="h-0 flex-1 border-t border-dotted border-[#999]" />;
}

const row = 'flex h-[22px] items-center whitespace-nowrap';
const guide = 'h-full shrink-0 border-l border-dotted border-[#999]';

function ProjectBrowser() {
  return (
    <section className="flex min-h-0 flex-1 flex-col">
      <PaletteHeader title="Project Browser - Project1" />
      <div className="flex min-h-0 flex-1 bg-white text-black">
        <ul className="flex-1 overflow-hidden pt-px pl-[3px] text-[15px]">
          {views.map((g) => (
            <li key={g.name}>
              <div className={row}>
                <span className={clsx(guide, 'w-[26px]')} />
                <span className={clsx(guide, 'flex w-[22px] items-center pr-[3px]')}>
                  <span className="-ml-[7px] pr-0.5">
                    <Expander open={g.open} />
                  </span>
                  <Dash />
                </span>
                {g.name}
              </div>
              {g.children && (
                <ul>
                  {g.children.map((c, i) => (
                    <li key={c} className={row}>
                      <span className={clsx(guide, 'w-[26px]')} />
                      <span className={clsx(guide, 'w-[26px]')} />
                      <span className="flex h-full w-[22px] items-center pr-[3px]">
                        <span
                          className={clsx(
                            'w-0 border-l border-dotted border-[#999]',
                            i === g.children!.length - 1 ? 'h-[11px] self-start' : 'h-full',
                          )}
                        />
                        <Dash />
                      </span>
                      {c}
                    </li>
                  ))}
                </ul>
              )}
            </li>
          ))}
          <li className={row}>
            <span className={clsx(guide, 'flex w-4 items-center')}>
              <Dash />
            </span>
            <Svg w={19} h={19} className="mr-[7px]">
              <path d="M1 1h17v17H1z" fill="#eef0f2" stroke="#7c838d" strokeWidth="1.600" />
              <path d="M1 1h17v3H1z" fill="#5e6773" />
              <path d="M3 6h4v3H3zM3 12h4v3H3z" fill="#6f7987" />
              <path d="M9 6h7M9 9h7M9 12h7M9 15h7" stroke="#a9b1bd" strokeWidth="1.400" />
            </Svg>
            Legends
          </li>
          <li className={row}>
            <span className={clsx(guide, 'flex w-4 items-center')}>
              <span className="-ml-[7px] pr-0.5">
                <Expander open />
              </span>
              <Dash />
            </span>
            <Svg w={19} h={16} className="mr-[7px]">
              <path d="M1 1h17v14H1z" fill="#f4f5f6" stroke="#7c838d" strokeWidth="1.600" />
              <path d="M1 1h17v3H1z" fill="#5e6773" />
              <path d="M1 7h17M1 11h17M6 4v11M10 4v11M14 4v11" stroke="#b4bac3" />
            </Svg>
            Schedules/Quantities (all)
          </li>
          <li className={row}>
            <span className={clsx(guide, 'w-[26px]')} />
            <span className={clsx(guide, 'w-[22px]')} />
            Room Schedule
          </li>
        </ul>
        <div className="flex w-5 flex-col items-center pt-[5px]">
          <Chevron dir="up" />
          <div className="mt-[18px] h-[246px] w-[19px] shrink-0 self-end bg-[#cacaca]" />
          <div className="mt-auto -mb-[2px]">
            <Chevron dir="down" />
          </div>
        </div>
      </div>
    </section>
  );
}

/* ---------- views ---------- */

function NavBar({ label2d, className }: { label2d?: boolean; className: string }) {
  return (
    <div className={clsx('absolute', className)}>
      <Svg w={36} h={118}>
        <rect x="1" y="1" width="34" height="116" rx="6" fill="#fdfdfd" stroke="#bcbcbc" strokeWidth="2" />
        <circle cx="28" cy="7" r="3.500" stroke="#a8a8a8" />
        <path d="M26.500 5.500l3 3M29.500 5.500l-3 3" stroke="#a8a8a8" />
        <path d="M7 32c0-6 4-10 9-10h4c4 0 6 3 6 8v4c0 5-4 8-9 8s-10-4-10-10z" fill="#f0f0f0" stroke="#a8a8a8" strokeWidth="1.400" />
        <circle cx="16.500" cy="32" r="5.500" fill="#fafafa" stroke="#a8a8a8" strokeWidth="1.400" />
        <path d="M12 37l-3 3M21 37l3 3" stroke="#a8a8a8" />
        <path d="M14 51h6l-3 4z" fill="#909090" />
        <path d="M5 58.500h26" stroke="#c4c4c4" strokeWidth="1.400" />
        <path d="M10 67h11v11H10z" fill="#bcd3ac" stroke="#8fb97f" />
        <circle cx="20" cy="78" r="3.500" fill="#f5f5f5" stroke="#909090" strokeWidth="1.300" />
        <path d="M23 81l3 3" stroke="#909090" strokeWidth="1.600" />
        <path d="M14 93h6l-3 4z" fill="#909090" />
        <circle cx="28" cy="110" r="3.500" stroke="#a8a8a8" />
        <path d="M26 110h4" stroke="#a8a8a8" />
        {label2d && (
          <text x="16" y="45" fontSize="10" fontWeight="700" fill="#6c9ccb">
            2D
          </text>
        )}
      </Svg>
    </div>
  );
}

function ViewControlBar({ scale, icons, className }: { scale: string; icons: string[]; className: string }) {
  return (
    <div className={clsx('flex h-[18px] shrink-0 items-start overflow-hidden bg-white pt-[2px] text-black', className)}>
      <button className="w-[61px] shrink-0 text-left text-[13px] leading-5 whitespace-nowrap">{scale}</button>
      <div className="flex gap-[5px]">
        {icons.map((n) => (
          <button key={n} aria-label={n}>
            <Svg w={20} h={20}>
              {controls[n]}
            </Svg>
          </button>
        ))}
      </div>
      <div className="ml-[7px] flex flex-1 items-start">
        <div className="mt-1">
          <Chevron dir="left" />
        </div>
        <div className="flex h-4 flex-1 justify-center">
          <div className="h-4 w-[21px] bg-[#cacaca]" />
        </div>
        <div className="mt-1">
          <Chevron dir="right" />
        </div>
      </div>
    </div>
  );
}

function LevelHead({ y, name, elevation }: { y: number; name: string; elevation: string }) {
  return (
    <g>
      <circle cx="70" cy={y} r="27.500" fill="#fff" stroke="#0038b8" />
      <path d={`M70 ${y}V${y - 27}A27 27 0 0197 ${y}zM70 ${y}V${y + 27}A27 27 0 0143 ${y}z`} fill="#0038b8" />
      <text x="123" y={y - 12} fontSize="29" className="font-['Liberation_Sans',sans-serif]">
        {name}
      </text>
      <text x="121" y={y + 35} fontSize="29" className="font-['Liberation_Sans',sans-serif]">
        {elevation}
      </text>
      <path d={`M97 ${y + 0.5}h114`} stroke="#000" />
    </g>
  );
}

function SectionView() {
  return (
    <section className="flex min-w-0 flex-[734] flex-col border-r-2 border-[#cacaca]">
      <div className="flex h-[25px] shrink-0 items-center bg-[#cacaca]">
        <div className="flex h-full w-40 items-center bg-white pr-[6px] pl-[6px]">
          <SectionHead size={18} />
          <span className="ml-[11px] flex-1 font-bold text-[#333]">Section 2</span>
          <button aria-label="Close Section 2">
            <CloseIcon />
          </button>
        </div>
        <button aria-label="View tabs" className="mr-[7px] ml-auto">
          <Svg w={10} h={9}>
            <path d="M0 1h10" stroke="#333" strokeWidth="1.500" />
            <path d="M0 4h10L5 9z" fill="#333" />
          </Svg>
        </button>
      </div>
      <div className="flex min-h-0 flex-1 bg-white pr-[2px]">
        <div className="flex min-w-0 flex-1 border-r border-[#cacaca]">
          <div className="relative min-w-0 flex-1">
            <svg className="absolute inset-0 h-full w-full" role="img" aria-label="Building section">
              <defs>
                <pattern id="hatch" x="275" y="627" width="14.500" height="20.500" patternUnits="userSpaceOnUse">
                  <path d="M-14.500 0L6 20.500M0 0l20.500 20.500M-29 0L-8.500 20.500" stroke="#000" />
                </pattern>
              </defs>
              <LevelHead y={80} name="Level 2" elevation="4000" />
              <LevelHead y={626} name="Level 1" elevation="0" />
              <g stroke="#000" fill="none">
                <path d="M244 80.500h43M320 80.500h108M460 80.500h44M536 80.500h108M677 80.500h32" />
                <path d="M268.500 2v645M315.500 2v624M244 626.500h465M268 647.500h441" />
              </g>
              <rect x="269" y="627" width="440" height="20" fill="url(#hatch)" />
            </svg>
            <NavBar label2d className="top-[2px] right-0" />
            <svg className="absolute top-[79px] right-0" width="32" height="3" aria-hidden="true">
              <path d="M0 1.500h8M22 1.500h10" stroke="#555" />
            </svg>
          </div>
          <div className="flex w-[21px] flex-col items-center pt-[6px] pb-1">
            <Chevron dir="up" />
            <div className="flex flex-1 items-center">
              <div className="h-[21px] w-[19px] bg-[#cacaca]" />
            </div>
            <Chevron dir="down" />
          </div>
        </div>
      </div>
      <div className="flex bg-white">
        <ViewControlBar
          scale="1 : 50"
          icons={['coarse', 'style', 'sun', 'shadow', 'crop', 'cropShow', 'glasses', 'reveal', 'properties', 'analytical', 'constraints']}
          className="flex-1 pr-[15px] pl-[33px]"
        />
        <Svg w={14} h={18}>
          <path d="M8 9h3v3H8zM3 14h3v3H3zM8 14h3v3H8z" fill="#b0b0b0" />
        </Svg>
      </div>
    </section>
  );
}

function ViewCube() {
  return (
    <Svg w={145} h={120}>
      <g stroke="#c4c4c4" strokeWidth="1.200" strokeDasharray="3 1">
        <ellipse cx="66" cy="69" rx="64.500" ry="40" />
        <ellipse cx="66" cy="67" rx="49" ry="30" />
      </g>
      <path d="M31 62l-2 8 20 10 32 6 14-6 8-18-6-8z" fill="#dcdcdc" />
      <path d="M54 5l43 9-17 23.500L33 27z" fill="#fbfbfb" stroke="#a8a8a8" />
      <path d="M33 27l47 10.500-.5 42L35 68z" fill="#f0f0f0" stroke="#a0a0a0" />
      <path d="M35 58l44.500 11v10L35 68z" fill="#d0d0d0" />
      <path d="M80 37.500L97 14l-1.500 43-16 22.500z" fill="#e6e6e6" stroke="#a0a0a0" />
      <g fontWeight="700" fill="#8e9aa8" textAnchor="middle">
        <text x="57" y="57" fontSize="13" transform="rotate(9 57 53)">
          RIGHT
        </text>
        <text x="67" y="25" fontSize="8" transform="rotate(-75 67 21)" fill="#9a9a9a">
          TOP
        </text>
        <text x="88" y="48" fontSize="7" transform="rotate(-58 88 46)">
          BACK
        </text>
      </g>
      <g fill="#fff" stroke="#b4b4b4" fontWeight="700" fontSize="18" textAnchor="middle">
        <text x="14" y="56" transform="rotate(-80 14 50)">
          S
        </text>
        <text x="39" y="107" transform="rotate(-75 39 101)">
          E
        </text>
        <text x="123" y="83" transform="rotate(100 123 77)">
          N
        </text>
      </g>
    </Svg>
  );
}

// Level lines repeat long dash, short dash every 114px along x.
const dashesA = [[0, 35], [54, 76], [93, 150], [168, 190], [207, 264], [282, 304], [321, 378], [396, 418], [435, 492], [510, 532], [549, 605]];
const dashesB = [[0, 35], [54, 76], [93, 150], [352, 378], [396, 418], [435, 492], [510, 532], [549, 605]];
const slope = 0.2314;

function levelLine(y: number, dashes: number[][]) {
  return dashes.map(([a, b]) => `M${a} ${y + a * slope}L${b} ${y + b * slope}`).join('');
}

function ThreeDView() {
  return (
    <section className="flex min-w-0 flex-[699] flex-col">
      <div className="h-[27px] shrink-0 border-b-2 border-[#eee] bg-[#cacaca]">
        <button className="flex h-[25px] w-40 items-center gap-[10px] bg-[#eee] pl-[6px] text-[#3a3a3a]">
          <Svg w={19} h={19}>
            <path d="M1 8l8-7 8 4v9l-8 4-7-3z" fill="#dde2e8" stroke="#a3abb6" strokeWidth="1.400" />
            <path d="M1 8l5-4 5 5v9l-9-3z" fill="#f4f6f8" stroke="#a3abb6" />
            <path d="M4 11h3v6l-3-1z" fill="#a3abb6" />
          </Svg>
          {'{3D}'}
        </button>
      </div>
      <div className="flex min-h-0 flex-1 flex-col border-l-2 border-[#eee] bg-white">
        <div className="relative min-h-0 flex-1 overflow-hidden">
          <div className="absolute top-[49px] right-0">
            <ViewCube />
          </div>
          <svg className="absolute inset-0 h-full w-full" role="img" aria-label="3D model" fill="none" stroke="#000">
            <path d={levelLine(9.7, dashesA)} />
            <path d={levelLine(139.7, dashesB)} />
            <path d="M166.500 428v5.500l215 49.500 58.500-77v-5.500L351.500 380.500" fill="#fff" />
            <path d="M346.500 469l35 9 58.500-77.500M381.500 478v5" />
            <path d="M160.500 167.500l57-75 12 2.500v80l122 28v261l-5 5.500-186-42.500z" fill="#fff" />
            <path d="M160.500 167.500l186 42.500v259.500l-186-42.500z" fill="#d3d3d3" />
            <path d="M229.500 95l-51 68.500 51 11.500M346.500 210l5-7" />
          </svg>
          <NavBar className="top-[171px] -right-[11px]" />
        </div>
        <ViewControlBar
          scale="1 : 100"
          icons={['medium', 'style', 'sun', 'shadow', 'teapot', 'crop', 'cropShow', 'lock3d', 'glasses', 'reveal', 'properties', 'analytical', 'displace', 'constraints']}
          className="-mr-[5px] pl-[29px]"
        />
      </div>
    </section>
  );
}

export default function App() {
  return (
    <div className="relative flex h-screen flex-col overflow-hidden border-r border-[#a8a8a8] bg-[#eee] font-['Open_Sans','Noto_Sans',sans-serif] text-[14px] leading-5 text-[#3a3a3a]">
      <RibbonTabs />
      <Ribbon />
      <div className="h-[33px] shrink-0" />
      <main className="flex min-h-0 flex-1 overflow-hidden border-t-2 border-[#cacaca]">
        <aside className="flex w-[445px] shrink-0 flex-col border-r-2 border-[#cacaca] pr-[3px]">
          <PropertiesPalette />
          <ProjectBrowser />
        </aside>
        <SectionView />
        <ThreeDView />
      </main>
      <svg className="pointer-events-none absolute top-[14px] left-[231px]" width="13" height="20" aria-hidden="true">
        <path d="M.5.5v16l4-3.500 3 6 2.500-1-2.500-6h5z" fill="#fff" stroke="#222233" />
      </svg>
    </div>
  );
}
